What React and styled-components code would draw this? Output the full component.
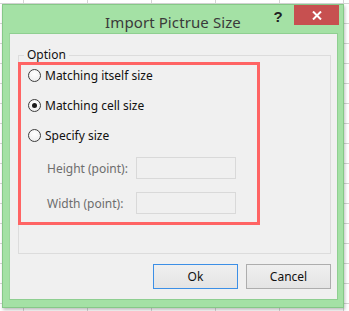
import React from "react";
import styled, { createGlobalStyle } from "styled-components";

const GlobalStyle = createGlobalStyle`
  html, body {
    margin: 0;
    padding: 0;
  }
  body {
    width: 349px;
    height: 311px;
    overflow: hidden;
    font-family: "Noto Sans", "Open Sans", sans-serif;
    background-color: #ffffff;
    background-image:
      repeating-linear-gradient(to right, transparent 0 23px, #d4d4d4 23px 24px, transparent 24px 64px),
      repeating-linear-gradient(to bottom, transparent 0 3px, #d4d4d4 3px 4px, transparent 4px 20px);
  }
`;

const Dialog = styled.div`
  position: relative;
  box-sizing: border-box;
  margin: 4px 0 0 2px;
  width: 342px;
  height: 304px;
  background: #a4e1a5;
  border: 1px solid #86c888;
  box-shadow: 1px 2px 3px rgba(0, 0, 0, 0.25);
  display: flex;
  flex-direction: column;
`;

const TitleBar = styled.div`
  position: relative;
  height: 28px;
  display: flex;
  align-items: flex-start;
  justify-content: center;
`;

const Title = styled.div`
  margin-top: 7px;
  font-size: 15px;
  color: #3a3a3a;
  letter-spacing: 0.1px;
`;

const TitleButtons = styled.div`
  position: absolute;
  right: 4px;
  top: 0;
  display: flex;
  align-items: flex-start;
`;

const HelpButton = styled.div`
  width: 26px;
  height: 20px;
  margin-right: 3px;
  font: bold 15px "Liberation Sans", sans-serif;
  color: #222;
  text-align: center;
  line-height: 20px;
  padding-top: 2px;
`;

const CloseButton = styled.div`
  width: 45px;
  height: 20px;
  background: #c75050;
  display: flex;
  align-items: center;
  justify-content: center;
`;

const Client = styled.div`
  position: relative;
  flex: 1;
  margin: 0 5px 7px 6px;
  background: #f0f0f0;
  border: 1px solid #8fcf91;
  border-left-color: #9ad69b;
  padding: 14px 6px 0 8px;
  display: flex;
  flex-direction: column;
`;

const GroupBox = styled.fieldset`
  margin: 0;
  height: 206px;
  box-sizing: border-box;
  border: 1px solid #dcdcdc;
  padding: 0 0 0 9px;
  display: flex;
  flex-direction: column;
`;

const Legend = styled.legend`
  padding: 0 3px;
  margin-left: -4px;
  margin-bottom: -2px;
  font-size: 12px;
  color: #101010;
  line-height: 14px;
`;

const RadioRow = styled.label`
  display: flex;
  align-items: center;
  height: 30px;
  font-size: 12px;
  color: #111;
  gap: 4px;
`;

const RadioCircle = styled.span`
  box-sizing: border-box;
  width: 13px;
  height: 13px;
  border-radius: 50%;
  border: 1px solid #3d3d3d;
  background: radial-gradient(circle at 50% 35%, #ffffff, #eaeaea);
  display: flex;
  align-items: center;
  justify-content: center;
  &::after {
    content: "";
    width: 5px;
    height: 5px;
    border-radius: 50%;
    background: ${(p) => (p.$checked ? "#1a1a1a" : "transparent")};
  }
`;

const FieldRow = styled.div`
  display: flex;
  align-items: center;
  height: ${(p) => p.$h}px;
  padding-left: 19px;
  font-size: 12px;
  color: #6d6d6d;
`;

const FieldLabel = styled.span`
  width: 89px;
`;

const FieldInput = styled.div`
  box-sizing: border-box;
  width: 100px;
  height: 22px;
  border: 1px solid #d9d9d9;
  background: #f0f0f0;
`;

const ButtonRow = styled.div`
  display: flex;
  justify-content: flex-end;
  gap: 8px;
  margin-top: 10px;
`;

const Button = styled.div`
  box-sizing: border-box;
  width: 85px;
  height: 25px;
  display: flex;
  align-items: center;
  justify-content: center;
  font-size: 12px;
  color: #111;
  border: 1px solid ${(p) => (p.$focused ? "#3c8fe6" : "#adadad")};
  background: linear-gradient(#efefef, #e4e4e4);
`;

const Highlight = styled.div`
  position: absolute;
  left: 8px;
  top: 28px;
  width: 242px;
  height: 163px;
  box-sizing: border-box;
  border: 3px solid #ff6464;
  pointer-events: none;
`;

const options = [
  { label: "Matching itself size", checked: false },
  { label: "Matching cell size", checked: true },
  { label: "Specify size", checked: false },
];

export default function App() {
  return (
    <>
      <GlobalStyle />
      <Dialog>
        <TitleBar>
          <Title>Import Pictrue Size</Title>
          <TitleButtons>
            <HelpButton>?</HelpButton>
            <CloseButton>
              <svg width="10" height="9" viewBox="0 0 10 9">
                <path d="M1 0.5 L9 8.5 M9 0.5 L1 8.5" stroke="#fff" strokeWidth="2" />
              </svg>
            </CloseButton>
          </TitleButtons>
        </TitleBar>
        <Client>
          <GroupBox>
            <Legend>Option</Legend>
            {options.map((o) => (
              <RadioRow key={o.label}>
                <RadioCircle $checked={o.checked} />
                {o.label}
              </RadioRow>
            ))}
            <FieldRow $h={36}>
              <FieldLabel>Height (point):</FieldLabel>
              <FieldInput />
            </FieldRow>
            <FieldRow $h={34}>
              <FieldLabel>Width (point):</FieldLabel>
              <FieldInput />
            </FieldRow>
          </GroupBox>
          <ButtonRow>
            <Button $focused>Ok</Button>
            <Button>Cancel</Button>
          </ButtonRow>
          <Highlight />
        </Client>
      </Dialog>
    </>
  );
}
